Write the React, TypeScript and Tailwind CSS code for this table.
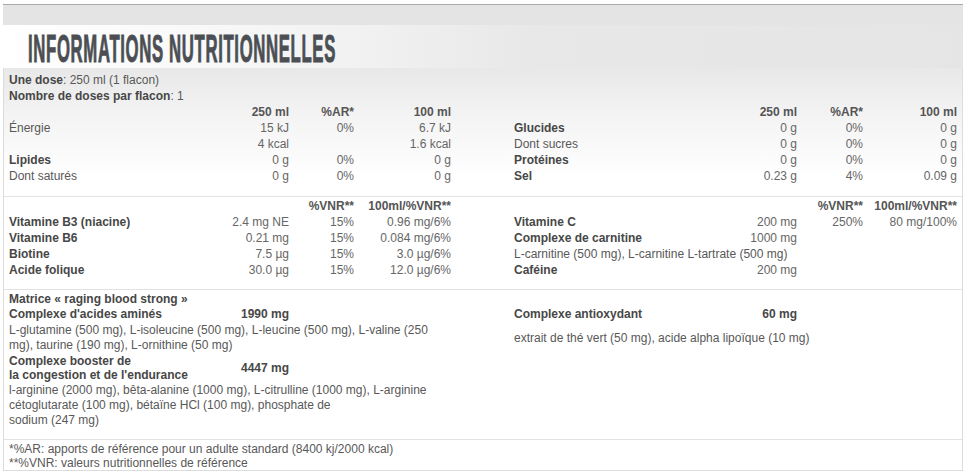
import React from 'react';

type Side = 'left' | 'right';

const cols = {
  left: { table: 'w-[442px]', c2: 'w-[65px]', c3: 'w-[97px]' },
  right: { table: 'w-[443px]', c2: 'w-[66px]', c3: 'w-[94px]' },
};

type RowData = {
  label?: string;
  bold?: boolean;
  a?: string;
  b?: string;
  c?: string;
  head?: boolean;
  span?: string;
};

const nutriLeft: RowData[] = [
  { head: true, a: '250 ml', b: '%AR*', c: '100 ml' },
  { label: 'Énergie', a: '15 kJ', b: '0%', c: '6.7 kJ' },
  { label: '', a: '4 kcal', c: '1.6 kcal' },
  { label: 'Lipides', bold: true, a: '0 g', b: '0%', c: '0 g' },
  { label: 'Dont saturés', a: '0 g', b: '0%', c: '0 g' },
];

const nutriRight: RowData[] = [
  { head: true, a: '250 ml', b: '%AR*', c: '100 ml' },
  { label: 'Glucides', bold: true, a: '0 g', b: '0%', c: '0 g' },
  { label: 'Dont sucres', a: '0 g', b: '0%', c: '0 g' },
  { label: 'Protéines', bold: true, a: '0 g', b: '0%', c: '0 g' },
  { label: 'Sel', bold: true, a: '0.23 g', b: '4%', c: '0.09 g' },
];

const vitLeft: RowData[] = [
  { head: true, b: '%VNR**', c: '100ml/%VNR**' },
  { label: 'Vitamine B3 (niacine)', bold: true, a: '2.4 mg NE', b: '15%', c: '0.96 mg/6%' },
  { label: 'Vitamine B6', bold: true, a: '0.21 mg', b: '15%', c: '0.084 mg/6%' },
  { label: 'Biotine', bold: true, a: '7.5 µg', b: '15%', c: '3.0 µg/6%' },
  { label: 'Acide folique', bold: true, a: '30.0 µg', b: '15%', c: '12.0 µg/6%' },
];

const vitRight: RowData[] = [
  { head: true, b: '%VNR**', c: '100ml/%VNR**' },
  { label: 'Vitamine C', bold: true, a: '200 mg', b: '250%', c: '80 mg/100%' },
  { label: 'Complexe de carnitine', bold: true, a: '1000 mg' },
  { span: 'L-carnitine (500 mg), L-carnitine L-tartrate (500 mg)' },
  { label: 'Caféine', bold: true, a: '200 mg' },
];

function Table({ side, rows }: { side: Side; rows: RowData[] }) {
  const w = cols[side];
  return (
    <div className={`${w.table} flex flex-col`}>
      {rows.map((r, i) =>
        r.span ? (
          <div key={i} className="h-4 leading-4 whitespace-nowrap text-[#585858]">
            {r.span}
          </div>
        ) : (
          <div key={i} className="flex h-4 leading-4 whitespace-nowrap">
            <div className={`flex-1 ${r.bold ? 'font-bold text-[#474747]' : 'text-[#585858]'}`}>{r.label}</div>
            <div className={`w-[70px] text-right ${r.head ? 'font-bold text-[#555]' : 'text-[#666]'}`}>{r.a}</div>
            <div className={`${w.c2} text-right ${r.head ? 'font-bold text-[#555]' : 'text-[#666]'}`}>{r.b}</div>
            <div className={`${w.c3} text-right ${r.head ? 'font-bold text-[#555]' : 'text-[#666]'}`}>{r.c}</div>
          </div>
        )
      )}
    </div>
  );
}

export default function App() {
  return (
    <div className="w-[966px] h-[474px] bg-white font-['Liberation_Sans',Arial,sans-serif] text-[12px] text-[#585858] overflow-hidden">
      <div className="pt-[4px] px-[3px]">
        {/* header */}
        <div className="h-px bg-[#a9a9a9]" />
        <div className="h-[20px] bg-[#e4e4e4]" />
        <div className="h-[43px] pl-[25px] pt-[5px] bg-[linear-gradient(to_right,#ffffff_0%,#f8f8f8_22%,#f0f0f0_40%,#e8e8e8_55%,#e5e5e5_100%)]">
          <div className="inline-block origin-left scale-x-[0.44] text-[38px] leading-[38px] font-bold tracking-[1.5px] text-[#4b4f54] whitespace-nowrap [-webkit-text-stroke:1px_#4b4f54]">
            INFORMATIONS NUTRITIONNELLES
          </div>
        </div>

        <div className="border-x border-b border-[#dcdcdc]">
          {/* nutrition */}
          <section className="pl-[5px] pr-[5px] pt-[4px] pb-[12px] border-b border-[#e2e2e2] bg-[linear-gradient(to_bottom,#e8e8e8_0px,#f3f3f3_45px,#ffffff_110px)]">
            <div className="h-4 leading-4">
              <span className="font-bold text-[#474747]">Une dose</span>: 250 ml (1 flacon)
            </div>
            <div className="h-4 leading-4">
              <span className="font-bold text-[#474747]">Nombre de doses par flacon</span>: 1
            </div>
            <div className="flex justify-between">
              <Table side="left" rows={nutriLeft} />
              <Table side="right" rows={nutriRight} />
            </div>
          </section>

          {/* vitamins */}
          <section className="pl-[5px] pr-[5px] pt-px pb-[11px] border-b border-[#e2e2e2]">
            <div className="flex justify-between">
              <Table side="left" rows={vitLeft} />
              <Table side="right" rows={vitRight} />
            </div>
          </section>

          {/* matrix */}
          <section className="pl-[5px] pr-[5px] pt-[2px] pb-[11px] border-b border-[#e2e2e2] leading-[15px]">
            <div className="grid grid-cols-[442px_443px] justify-between items-center">
              <div className="h-[15px] font-bold text-[#474747]">Matrice « raging blood strong »</div>
              <div />

              <div className="flex h-[15px] font-bold text-[#474747]">
                <div className="w-[210px]">Complexe d'acides aminés</div>
                <div className="w-[70px] text-right">1990 mg</div>
              </div>
              <div className="flex h-[15px] font-bold text-[#474747]">
                <div className="w-[213px]">Complexe antioxydant</div>
                <div className="w-[70px] text-right">60 mg</div>
              </div>

              <div className="mt-px whitespace-nowrap">
                <div>L-glutamine (500 mg), L-isoleucine (500 mg), L-leucine (500 mg), L-valine (250</div>
                <div>mg), taurine (190 mg), L-ornithine (50 mg)</div>
              </div>
              <div className="mt-px whitespace-nowrap">extrait de thé vert (50 mg), acide alpha lipoïque (10 mg)</div>

              <div className="mt-px flex items-center font-bold text-[#474747] leading-[14px]">
                <div className="w-[210px]">
                  <div>Complexe booster de</div>
                  <div>la congestion et de l'endurance</div>
                </div>
                <div className="w-[70px] text-right">4447 mg</div>
              </div>
              <div />

              <div className="mt-px whitespace-nowrap">
                <div>l-arginine (2000 mg), bêta-alanine (1000 mg), L-citrulline (1000 mg), L-arginine</div>
                <div>cétoglutarate (100 mg), bétaïne HCl (100 mg), phosphate de</div>
                <div>sodium (247 mg)</div>
              </div>
              <div />
            </div>
          </section>

          {/* footnotes */}
          <section className="pl-[5px] pt-[2px] leading-[14px]">
            <div>*%AR: apports de référence pour un adulte standard (8400 kj/2000 kcal)</div>
            <div>**%VNR: valeurs nutritionnelles de référence</div>
          </section>
        </div>
      </div>
    </div>
  );
}
